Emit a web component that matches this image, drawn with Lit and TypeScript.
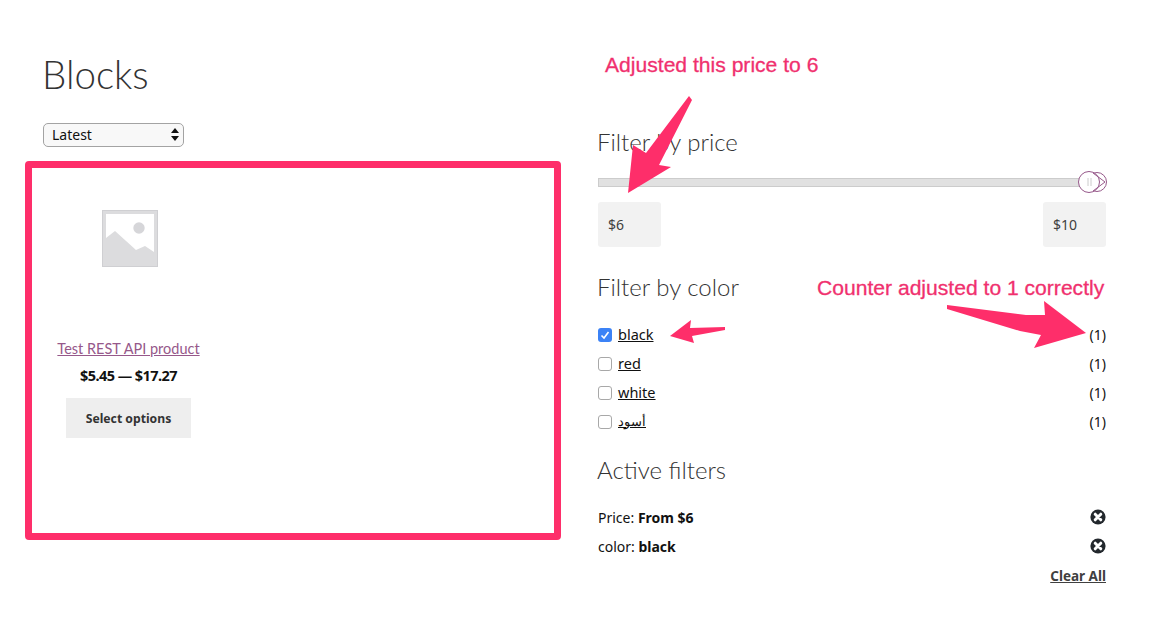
import { LitElement, html, css, svg } from "lit";
import { customElement } from "lit/decorators.js";

const colors = ["black", "red", "white", "أسود"];

const removeIcon = html`<svg class="remove" viewBox="0 0 16 16" width="16" height="16">
  <circle cx="8" cy="8" r="7.6" fill="#23282d"></circle>
  <path d="M5.2 5.2 10.8 10.8M10.8 5.2 5.2 10.8" stroke="#fff" stroke-width="3" stroke-linecap="round"></path>
</svg>`;

// arrows and the box are the screenshot's markup, drawn on top of the page
const arrows = svg`
  <path d="M689 96 692 100 659 165 671 167 628 193 633 145 646 153Z"></path>
  <path d="M947 305 1026 315 1045 315 1044 301 1086 333 1034 348 1041 335 1020 331 947 309Z"></path>
  <path d="M670 336 691 320 690 328 725 327 725 330 692 336 694 343Z"></path>
`;

@customElement("app-root")
export class AppRoot extends LitElement {
  static styles = css`
    :host {
      display: block;
      position: relative;
      width: 1163px;
      height: 619px;
      overflow: hidden;
      background: #fff;
      color: #404040;
      font-family: "Noto Sans", "Liberation Sans", sans-serif;
    }

    .page {
      display: grid;
      grid-template-columns: 555px 508px;
      padding-left: 43px;
    }

    h1 {
      margin: 0 0 0 -1px;
      padding-top: 49px;
      font-family: Lato, sans-serif;
      font-size: 38.5px;
      line-height: 50px;
      font-weight: 300;
      color: #333;
    }

    .sort {
      position: relative;
      width: 141px;
      height: 24px;
      margin-top: 24px;
    }

    select {
      appearance: none;
      display: block;
      width: 100%;
      height: 100%;
      padding: 0 0 2px 8px;
      box-sizing: border-box;
      border: 1px solid #a3a3a3;
      border-radius: 5px;
      background: #f8f8f8;
      color: #111;
      font: 14px "Noto Sans", sans-serif;
    }

    .sort svg {
      position: absolute;
      right: 5px;
      top: 5px;
    }

    .product {
      display: flex;
      flex-direction: column;
      align-items: center;
      width: 171px;
      padding-top: 63px;
    }

    .placeholder {
      display: block;
      margin-bottom: 71px;
      margin-left: 3px;
    }

    .title {
      font-size: 14.5px;
      line-height: 22px;
      font-weight: 400;
      font-family: Lato, sans-serif;
      color: #96588a;
      text-decoration: underline;
    }

    .price {
      margin-top: 4px;
      font-family: "Noto Sans", sans-serif;
      font-size: 14.5px;
      line-height: 22px;
      font-weight: 700;
      letter-spacing: -0.55px;
      color: #111;
    }

    .button {
      display: flex;
      align-items: center;
      justify-content: center;
      width: 125px;
      height: 40px;
      margin-top: 12px;
      background: #eee;
      color: #333;
      font-size: 12.2px;
      font-weight: 700;
    }

    .sidebar {
      padding-top: 125px;
    }

    h3 {
      margin: 0 0 0 -1px;
      font-family: Lato, sans-serif;
      font-size: 24px;
      line-height: 34px;
      font-weight: 300;
      color: #333;
    }

    .slider {
      position: relative;
      height: 9px;
      margin-top: 19px;
      margin-right: 16px;
      box-sizing: border-box;
      border: 1px solid #ccc;
      background: #e1e1e1;
    }

    .slider svg {
      position: absolute;
      right: -18px;
      top: -8px;
    }

    .prices {
      display: flex;
      justify-content: space-between;
      margin-top: 15px;
      margin-bottom: 23px;
    }

    .prices span {
      display: flex;
      align-items: center;
      width: 63px;
      height: 45px;
      padding-left: 10px;
      box-sizing: border-box;
      border-radius: 3px;
      background: #f2f2f2;
      font-size: 14px;
      color: #404040;
    }

    .colors {
      display: flex;
      flex-direction: column;
      gap: 7px;
      margin-top: 19px;
      margin-bottom: 21px;
    }

    .color {
      display: flex;
      align-items: center;
      height: 22px;
      font-size: 14.5px;
      color: #111;
    }

    .box {
      width: 14px;
      height: 14px;
      margin: 2px 6px 0 0;
      box-sizing: border-box;
      border: 1px solid #a8a8a8;
      border-radius: 3px;
      background: #fff;
    }

    .box.on {
      border: 0;
      background: #3b82f6;
    }

    .box svg {
      display: block;
    }

    .name {
      text-decoration: underline;
    }

    .name.arabic {
      font-size: 12.5px;
    }

    .count {
      margin-left: auto;
      font-size: 14px;
    }

    .active {
      display: flex;
      flex-direction: column;
      gap: 7px;
      margin-top: 19px;
    }

    .active div {
      display: flex;
      align-items: center;
      justify-content: space-between;
      height: 22px;
      font-size: 14px;
      color: #111;
    }

    .remove {
      display: block;
    }

    b {
      font-weight: 700;
    }

    .clear {
      margin-top: 8px;
      line-height: 22px;
      text-align: right;
      font-size: 13.5px;
      font-weight: 700;
      color: #404040;
      text-decoration: underline;
    }

    .frame {
      position: absolute;
      left: 25px;
      top: 161px;
      width: 536px;
      height: 379px;
      box-sizing: border-box;
      border: 7px solid #fe2e6a;
      border-radius: 4px;
    }

    .note {
      position: absolute;
      font-family: "Liberation Sans", Arial, sans-serif;
      font-size: 21.1px;
      line-height: 24px;
      color: #f0306e;
      white-space: nowrap;
      -webkit-text-stroke: 0.3px #f0306e;
    }

    .note.price-note {
      left: 605px;
      top: 53px;
    }

    .note.count-note {
      left: 817px;
      top: 276px;
    }

    .arrows {
      position: absolute;
      left: 0;
      top: 0;
      fill: #fe2e6a;
      pointer-events: none;
    }
  `;

  render() {
    return html`
      <div class="page">
        <main>
          <h1>Blocks</h1>
          <div class="sort">
            <select><option>Latest</option></select>
            <svg width="8" height="13" viewBox="0 0 8 13" fill="#111">
              <path d="M4 0 8 5H0ZM4 13 0 8H8Z"></path>
            </svg>
          </div>
          <div class="product">
            <svg class="placeholder" width="56" height="57" viewBox="0 0 56 57">
              <rect x="0.5" y="0.5" width="55" height="56" fill="#dcdcde" stroke="#cfcfd2"></rect>
              <rect x="4" y="4" width="48" height="49" fill="#fff"></rect>
              <circle cx="37" cy="18" r="5.700" fill="#d6d6d9"></circle>
              <path d="M4 28 13 21 34 40 43 36 52 42V53H4Z" fill="#dcdcde"></path>
            </svg>
            <span class="title">Test REST API product</span>
            <span class="price">$5.45 — $17.27</span>
            <span class="button">Select options</span>
          </div>
        </main>

        <aside class="sidebar">
          <h3>Filter by price</h3>
          <div class="slider">
            <svg width="30" height="22" viewBox="0 0 30 22" fill="none" stroke="#96588a">
              <circle cx="20" cy="11" r="9.500" fill="#fff"></circle>
              <circle cx="12" cy="11" r="10.500" fill="#fff"></circle>
              <path d="M16 2 28 11 16 20"></path>
              <path d="M11 7V15M14 7V15" stroke="#ccc"></path>
            </svg>
          </div>
          <div class="prices"><span>$6</span><span>$10</span></div>

          <h3>Filter by color</h3>
          <div class="colors">
            ${colors.map(
              (c, i) => html`
                <div class="color">
                  <span class="box ${i === 0 ? "on" : ""}">
                    ${i === 0
                      ? html`<svg width="14" height="14" viewBox="0 0 14 14" fill="none" stroke="#fff" stroke-width="1.6">
                          <path d="M3.500 7.500 6 10 10.500 4"></path>
                        </svg>`
                      : ""}
                  </span>
                  <span class="name ${i === 3 ? "arabic" : ""}">${c}</span>
                  <span class="count">(1)</span>
                </div>
              `
            )}
          </div>

          <h3>Active filters</h3>
          <div class="active">
            <div><span>Price: <b>From $6</b></span>${removeIcon}</div>
            <div><span>color: <b>black</b></span>${removeIcon}</div>
          </div>
          <div class="clear">Clear All</div>
        </aside>
      </div>

      <div class="frame"></div>
      <svg class="arrows" width="1163" height="619">${arrows}</svg>
      <span class="note price-note">Adjusted this price to 6</span>
      <span class="note count-note">Counter adjusted to 1 correctly</span>
    `;
  }
}
